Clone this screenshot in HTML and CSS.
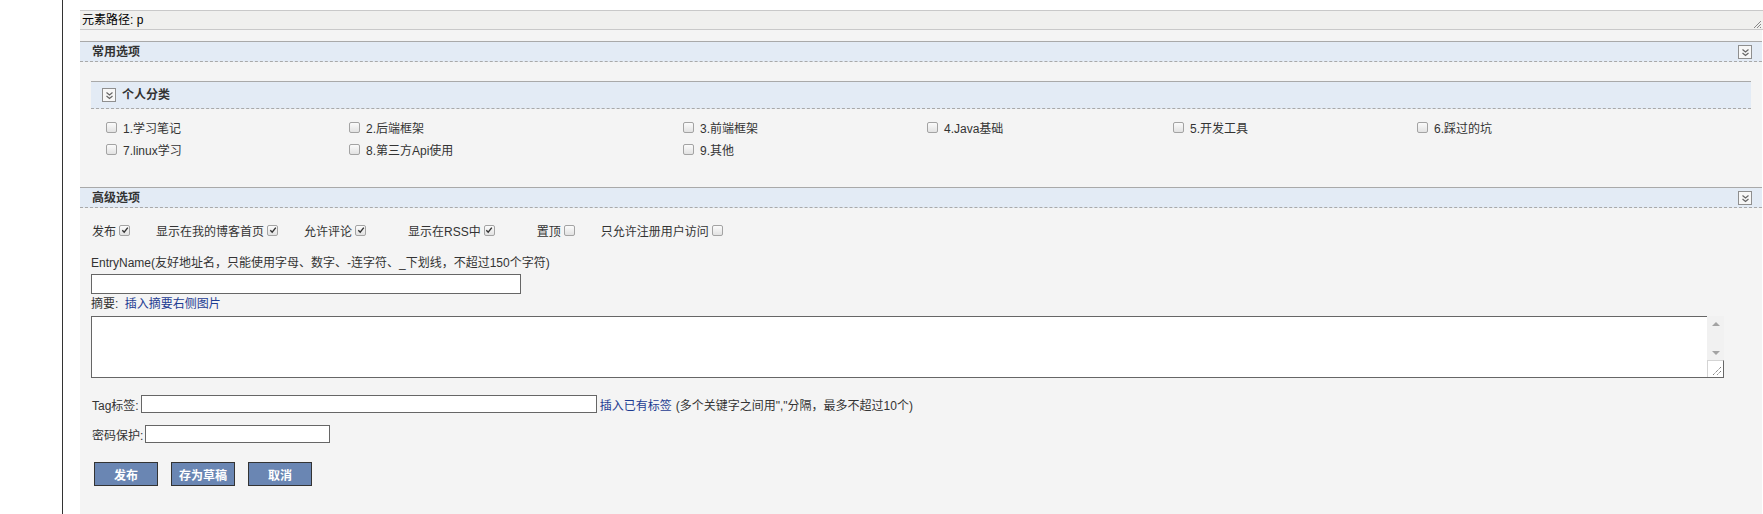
FILE: index.html
```html
<!DOCTYPE html>
<html lang="zh-CN">
<head>
<meta charset="utf-8">
<title>编辑</title>
<link rel="stylesheet" href="styles.css">
</head>
<body>
<div class="page">
  <aside class="rail"></aside>
  <main class="main">
    <div class="pathbar">
      <span class="path-text">元素路径: p</span>
      <svg class="grip" width="10" height="10" viewBox="0 0 10 10"><path d="M9 2 L2 9 M9 5 L5 9 M9 8 L8 9" stroke="#888" stroke-width="1" fill="none"/></svg>
    </div>
    <div class="form">
      <div class="sec-head">
        <span class="sec-title">常用选项</span>
        <span class="toggle"><svg width="9" height="9" viewBox="0 0 9 9"><path d="M1.5 1.5 L4.5 4 L7.5 1.5 M1.5 5 L4.5 7.5 L7.5 5" stroke="#666" stroke-width="1.2" fill="none"/></svg></span>
      </div>
      <div class="panel">
        <div class="panel-head">
          <span class="toggle small"><svg width="9" height="9" viewBox="0 0 9 9"><path d="M1.5 1.5 L4.5 4 L7.5 1.5 M1.5 5 L4.5 7.5 L7.5 5" stroke="#666" stroke-width="1.2" fill="none"/></svg></span>
          <span class="panel-title">个人分类</span>
        </div>
        <div class="cats">
          <label class="cat"><span class="cb"></span>1.学习笔记</label>
          <label class="cat"><span class="cb"></span>2.后端框架</label>
          <label class="cat"><span class="cb"></span>3.前端框架</label>
          <label class="cat"><span class="cb"></span>4.Java基础</label>
          <label class="cat"><span class="cb"></span>5.开发工具</label>
          <label class="cat"><span class="cb"></span>6.踩过的坑</label>
          <label class="cat"><span class="cb"></span>7.linux学习</label>
          <label class="cat"><span class="cb"></span>8.第三方Api使用</label>
          <label class="cat"><span class="cb"></span>9.其他</label>
        </div>
      </div>
      <div class="sec-head adv">
        <span class="sec-title">高级选项</span>
        <span class="toggle"><svg width="9" height="9" viewBox="0 0 9 9"><path d="M1.5 1.5 L4.5 4 L7.5 1.5 M1.5 5 L4.5 7.5 L7.5 5" stroke="#666" stroke-width="1.2" fill="none"/></svg></span>
      </div>
      <div class="body">
        <div class="opts">
          <label class="opt">发布<span class="cb on"><svg width="8" height="8" viewBox="0 0 8 8"><path d="M1.3 4.2 L3.2 6.2 L6.8 1.6" stroke="#333" stroke-width="1.4" fill="none"/></svg></span></label>
          <label class="opt">显示在我的博客首页<span class="cb on"><svg width="8" height="8" viewBox="0 0 8 8"><path d="M1.3 4.2 L3.2 6.2 L6.8 1.6" stroke="#333" stroke-width="1.4" fill="none"/></svg></span></label>
          <label class="opt wide">允许评论<span class="cb on"><svg width="8" height="8" viewBox="0 0 8 8"><path d="M1.3 4.2 L3.2 6.2 L6.8 1.6" stroke="#333" stroke-width="1.4" fill="none"/></svg></span></label>
          <label class="opt wide">显示在RSS中<span class="cb on"><svg width="8" height="8" viewBox="0 0 8 8"><path d="M1.3 4.2 L3.2 6.2 L6.8 1.6" stroke="#333" stroke-width="1.4" fill="none"/></svg></span></label>
          <label class="opt">置顶<span class="cb"></span></label>
          <label class="opt">只允许注册用户访问<span class="cb"></span></label>
        </div>
        <div class="entry-label">EntryName(友好地址名，只能使用字母、数字、-连字符、_下划线，不超过150个字符)</div>
        <input class="entry-input" type="text">
        <div class="summary-label">摘要: <a class="link" href="#">插入摘要右侧图片</a></div>
        <div class="summary-wrap">
          <textarea class="summary"></textarea>
          <div class="vscroll">
            <span class="arrow up"></span>
            <span class="track"></span>
            <span class="arrow down"></span>
            <span class="resizer"><svg width="10" height="10" viewBox="0 0 10 10"><path d="M9 1 L1 9 M9 5 L5 9" stroke="#666" stroke-width="1" stroke-dasharray="1.2 0.8" fill="none"/></svg></span>
          </div>
        </div>
        <div class="row tag-row">
          <span class="lbl">Tag标签:</span>
          <input class="tag-input" type="text">
          <a class="link" href="#">插入已有标签</a>
          <span class="hint">(多个关键字之间用","分隔，最多不超过10个)</span>
        </div>
        <div class="row pwd-row">
          <span class="lbl">密码保护:</span>
          <input class="pwd-input" type="text">
        </div>
        <div class="buttons">
          <button class="btn first">发布</button>
          <button class="btn">存为草稿</button>
          <button class="btn">取消</button>
        </div>
      </div>
    </div>
  </main>
</div>
</body>
</html>
```
FILE: styles.css
```css
html, body {
  margin: 0;
  padding: 0;
  background: #fff;
}
body {
  font-family: "Liberation Sans", "Noto Sans CJK SC", sans-serif;
  font-size: 12px;
  color: #333;
}
.page {
  display: flex;
  width: 1763px;
  height: 514px;
  overflow: hidden;
}
.rail {
  width: 62px;
  flex: none;
  border-right: 1px solid #333;
  background: #fff;
}
.main {
  flex: 1;
  margin-left: 17px;
  display: flex;
  flex-direction: column;
  min-width: 0;
}
.pathbar {
  margin-top: 10px;
  height: 18px;
  border-top: 1px solid #c9c9c9;
  border-bottom: 1px solid #c9c9c9;
  background: #f0f0ee;
  display: flex;
  align-items: center;
  justify-content: space-between;
  padding-left: 2px;
  color: #000;
  line-height: 18px;
}
.grip {
  align-self: flex-end;
  margin-right: 1px;
}
.form {
  flex: 1;
  background: #f4f4f4;
  padding-top: 11px;
  margin-right: 1px;
}
.sec-head {
  height: 19px;
  border-top: 1px solid #a9a9a9;
  border-bottom: 1px dashed #a9a9a9;
  background: #e3ebf5;
  display: flex;
  align-items: center;
  justify-content: space-between;
  padding-left: 12px;
  padding-right: 10px;
}
.sec-title, .panel-title {
  font-weight: bold;
  color: #333;
  line-height: 16px;
}
.toggle {
  width: 12px;
  height: 12px;
  border: 1px solid #8f8f8f;
  background: #f7f7f7;
  display: flex;
  align-items: center;
  justify-content: center;
  margin-top: 1px;
}
.panel {
  margin: 19px 11px 0 11px;
}
.panel-head {
  height: 26px;
  border-top: 1px solid #a9a9a9;
  border-bottom: 1px dashed #a9a9a9;
  background: #e3ebf5;
  display: flex;
  align-items: center;
  padding-left: 11px;
  gap: 6px;
}
.toggle.small {
  margin-top: 0;
}
.cats {
  display: grid;
  grid-template-columns: 243px 334px 244px 246px 244px 1fr;
  grid-auto-rows: 22px;
  padding: 7px 0 0 15px;
}
.cat {
  display: flex;
  align-items: center;
  color: #333;
}
.cb {
  width: 9px;
  height: 9px;
  border: 1px solid #a3a3a3;
  border-radius: 2px;
  background: linear-gradient(#fbfbfb, #e2e2e2);
  display: inline-flex;
  align-items: center;
  justify-content: center;
  flex: none;
}
.cat .cb {
  margin-right: 6px;
}
.adv {
  margin-top: 27px;
}
.body {
  padding-left: 11px;
}
.opts {
  margin-top: 12px;
  height: 20px;
  display: flex;
  align-items: center;
  gap: 26px;
  padding-left: 1px;
}
.opt {
  display: flex;
  align-items: center;
  gap: 3px;
}
.opt.wide {
  margin-right: 16px;
}
.entry-label {
  margin-top: 15px;
  line-height: 16px;
}
.entry-input {
  display: block;
  margin: 3px 0 0 0;
  box-sizing: border-box;
  width: 430px;
  height: 20px;
  border: 1px solid #666;
  background: #fff;
  padding: 0 2px;
}
.summary-label {
  margin-top: 2px;
  line-height: 16px;
}
.summary-label .link {
  margin-left: 3px;
}
.link {
  color: #1d3c92;
  text-decoration: none;
}
.summary-wrap {
  display: flex;
  margin-top: 4px;
  width: 1633px;
  height: 62px;
  box-sizing: border-box;
  border-bottom: 1px solid #666;
}
.summary {
  flex: 1;
  display: block;
  margin: 0;
  box-sizing: border-box;
  height: 61px;
  border: 1px solid #666;
  border-right: none;
  border-bottom: none;
  background: #fff;
  resize: none;
  padding: 2px;
  outline: none;
}
.vscroll {
  width: 17px;
  flex: none;
  display: flex;
  flex-direction: column;
  background: #f1f1f1;
}
.arrow {
  height: 15px;
  display: flex;
  justify-content: center;
  align-items: center;
}
.arrow::before {
  content: "";
  width: 0;
  height: 0;
  border-left: 4px solid transparent;
  border-right: 4px solid transparent;
}
.arrow.up::before {
  border-bottom: 4px solid #a3a3a3;
}
.arrow.down::before {
  border-top: 4px solid #a3a3a3;
}
.track {
  flex: 1;
}
.resizer {
  height: 17px;
  box-sizing: border-box;
  border-top: 1px solid #d4d4d4;
  border-left: 1px solid #d4d4d4;
  border-right: 1px solid #666;
  background: #fff;
  display: flex;
  align-items: flex-end;
  justify-content: flex-end;
  padding: 0 1px 1px 0;
}
.row {
  display: flex;
  align-items: center;
}
.tag-row {
  margin-top: 17px;
  height: 18px;
}
.lbl {
  margin-left: 1px;
  margin-right: 2px;
}
.tag-input {
  box-sizing: border-box;
  width: 456px;
  height: 18px;
  border: 1px solid #666;
  background: #fff;
  margin: 0 3px 0 0;
  padding: 0 2px;
}
.hint {
  margin-left: 4px;
  color: #333;
}
.pwd-row {
  margin-top: 12px;
  height: 18px;
}
.pwd-input {
  box-sizing: border-box;
  width: 185px;
  height: 18px;
  border: 1px solid #666;
  background: #fff;
  margin: 0;
  padding: 0 2px;
}
.buttons {
  margin-top: 19px;
  display: flex;
  gap: 13px;
  padding-left: 3px;
}
.btn {
  width: 64px;
  height: 24px;
  box-sizing: border-box;
  border: 1px solid #333;
  background: #6a86b3;
  color: #fff;
  font-family: "Liberation Sans", "Noto Sans CJK SC", sans-serif;
  font-size: 12px;
  font-weight: bold;
  padding: 0;
}
```
